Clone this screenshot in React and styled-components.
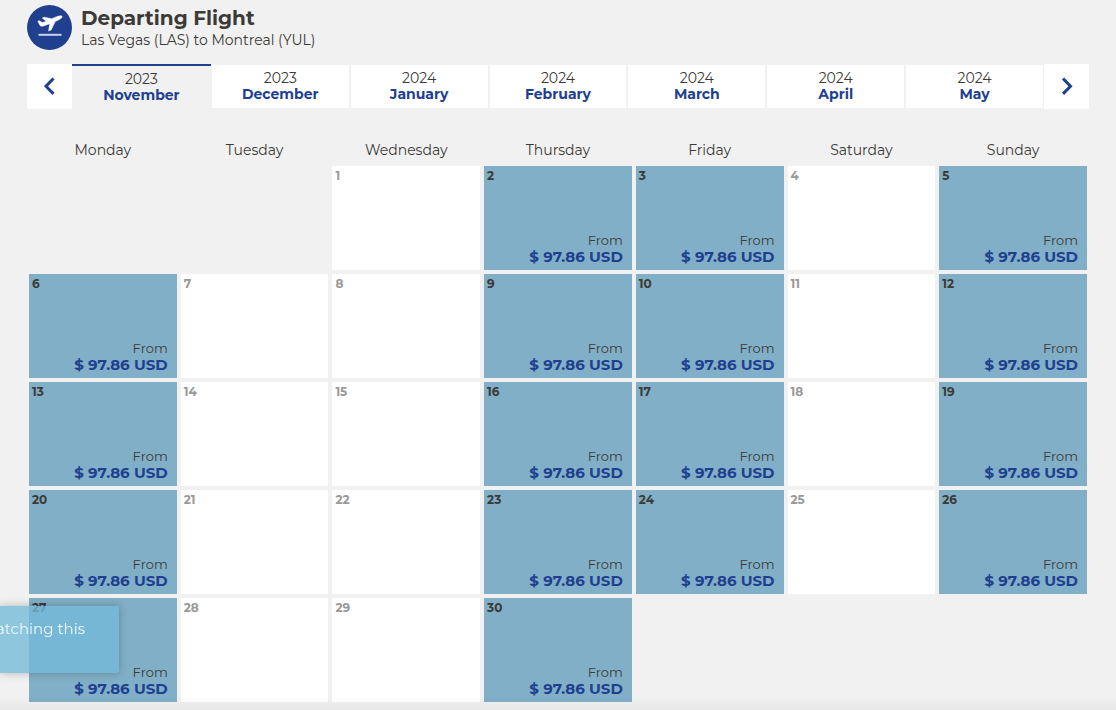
import React, { useState } from 'react';
import styled, { createGlobalStyle, ThemeProvider } from 'styled-components';

const theme = {
  navy: '#203f8f',
  text: '#3c3a36',
  muted: '#999997',
  page: '#f1f1f1',
  fare: '#81afc7',
};

const GlobalStyle = createGlobalStyle`
  *, *::before, *::after {
    box-sizing: border-box;
  }
  body {
    margin: 0;
    background: ${(props) => props.theme.page};
    color: ${(props) => props.theme.text};
    font-family: Montserrat, Inter, 'Open Sans', sans-serif;
    font-size: 14px;
    line-height: 16px;
  }
  button {
    margin: 0;
    padding: 0;
    border: 0;
    border-radius: 0;
    background: none;
    color: inherit;
    font: inherit;
    cursor: pointer;
  }
`;

const Page = styled.main`
  padding: 5px 27px 6px;
`;

const Header = styled.header`
  display: flex;
  gap: 9px;
  margin-bottom: 14px;
`;

const HeaderIcon = styled.svg`
  flex: none;
  width: 45px;
  height: 45px;
`;

const Title = styled.h1`
  margin: 0;
  font-size: 20px;
  font-weight: 700;
  line-height: 26px;
`;

const Route = styled.p`
  margin: 0;
  line-height: 18px;
`;

const MonthNav = styled.nav`
  display: flex;
  height: 45px;
  margin-bottom: 32px;
`;

const ArrowButton = styled.button`
  display: flex;
  flex: none;
  align-items: center;
  justify-content: center;
  width: 45px;
  background: #fff;
  color: ${(props) => props.theme.navy};
`;

const Months = styled.div`
  display: grid;
  flex: 1;
  grid-template-columns: repeat(7, minmax(0, 1fr));
`;

const MonthTab = styled.button`
  display: flex;
  flex-direction: column;
  align-items: center;
  padding-top: 5px;
  border: 0 solid ${(props) => props.theme.page};
  border-width: ${(props) => (props.$active ? '2px 0 0' : '1px')};
  border-top-color: ${(props) =>
    props.$active ? props.theme.navy : props.theme.page};
  background: ${(props) => (props.$active ? props.theme.page : '#fff')};
`;

const MonthName = styled.strong`
  color: ${(props) => props.theme.navy};
  font-weight: 700;
`;

const Calendar = styled.table`
  width: 100%;
  border-collapse: collapse;
  table-layout: fixed;

  th {
    height: 23px;
    padding: 0 0 5px;
    font-weight: 400;
  }
  td {
    height: 108px;
    padding: 2px;
  }
`;

const EmptyDay = styled.div`
  height: 104px;
  padding: 2px 3px;
  background: #fff;
  color: ${(props) => props.theme.muted};
  font-size: 12px;
  font-weight: 700;
`;

const FareDay = styled.button`
  display: flex;
  flex-direction: column;
  align-items: flex-end;
  width: 100%;
  height: 104px;
  padding: 2px 9px 5px 3px;
  background: ${(props) => props.theme.fare};
`;

const DayNumber = styled.span`
  align-self: flex-start;
  font-size: 12px;
  font-weight: 700;
`;

const From = styled.span`
  margin-top: auto;
  font-size: 13px;
  line-height: 17px;
`;

const Price = styled.span`
  color: ${(props) => props.theme.navy};
  font-size: 15px;
  font-weight: 700;
`;

const Toast = styled.aside`
  position: fixed;
  bottom: 37px;
  left: 0;
  display: flex;
  justify-content: flex-end;
  width: 119px;
  height: 67px;
  padding: 15px 34px 15px 0;
  border-radius: 0 3px 3px 0;
  background: rgba(114, 186, 217, 0.78);
  box-shadow: 0 0 8px rgba(0, 0, 0, 0.25);
  color: #eef7fb;
  font-size: 15px;
  white-space: nowrap;
`;

const BottomShade = styled.div`
  position: fixed;
  right: 0;
  bottom: 0;
  left: 0;
  height: 14px;
  background: linear-gradient(rgba(0, 0, 0, 0), rgba(0, 0, 0, 0.04));
  pointer-events: none;
`;

const MONTHS = [
  { year: 2023, name: 'November' },
  { year: 2023, name: 'December' },
  { year: 2024, name: 'January' },
  { year: 2024, name: 'February' },
  { year: 2024, name: 'March' },
  { year: 2024, name: 'April' },
  { year: 2024, name: 'May' },
];

const WEEKDAYS = [
  'Monday',
  'Tuesday',
  'Wednesday',
  'Thursday',
  'Friday',
  'Saturday',
  'Sunday',
];

const FARE_DAYS = [2, 3, 5, 6, 9, 10, 12, 13, 16, 17, 19, 20, 23, 24, 26, 27, 30];

// November 2023 starts on a Wednesday
const WEEKS = [0, 1, 2, 3, 4].map((week) =>
  WEEKDAYS.map((_, index) => {
    const day = week * 7 + index - 1;
    return day >= 1 && day <= 30 ? day : null;
  })
);

const DepartureIcon = () => (
  <HeaderIcon viewBox="0 0 45 45" aria-hidden="true">
    <circle cx="22.5" cy="22.5" r="22.5" fill="#203f8f" />
    <path
      d="M10.8 16.2l1.5-.5 3.2 1.9 3.8-1.4-4.1-3.1 2.3-.9 7.2 1.6 4.9-2.1c2-.8 5-1.2 5.5-.4.6 1-1.4 2.6-3.3 3.5l-3.5 1.7-4.2 8.5-2.5 1 1.1-7.3-4.7 1.8c-1.8.7-3.8 1.2-4.8.3z"
      fill="#fff"
      stroke="#fff"
      strokeWidth="0.5"
      strokeLinejoin="round"
    />
    <path d="M11.5 29.8h23" stroke="#c9d2ea" strokeWidth="2" />
  </HeaderIcon>
);

const Chevron = ({ d }) => (
  <svg width="12" height="20" viewBox="0 0 12 20" aria-hidden="true">
    <path d={d} fill="none" stroke="currentColor" strokeWidth="3" />
  </svg>
);

const DayCell = ({ day }) => {
  if (!day) return <td />;
  if (!FARE_DAYS.includes(day)) {
    return (
      <td>
        <EmptyDay>{day}</EmptyDay>
      </td>
    );
  }
  return (
    <td>
      <FareDay type="button">
        <DayNumber>{day}</DayNumber>
        <From>From</From>
        <Price>$ 97.86 USD</Price>
      </FareDay>
    </td>
  );
};

const App = () => {
  const [active, setActive] = useState(0);

  return (
    <ThemeProvider theme={theme}>
      <GlobalStyle />
      <Page>
        <Header>
          <DepartureIcon />
          <div>
            <Title>Departing Flight</Title>
            <Route>Las Vegas (LAS) to Montreal (YUL)</Route>
          </div>
        </Header>
        <MonthNav aria-label="Months">
          <ArrowButton type="button" aria-label="Previous month">
            <Chevron d="M9.5 1.5L2 9.2l7.5 7.7" />
          </ArrowButton>
          <Months>
            {MONTHS.map((month, index) => (
              <MonthTab
                key={month.name}
                type="button"
                $active={index === active}
                onClick={() => setActive(index)}
              >
                <span>{month.year}</span>
                <MonthName>{month.name}</MonthName>
              </MonthTab>
            ))}
          </Months>
          <ArrowButton type="button" aria-label="Next month">
            <Chevron d="M2 1.5l7.5 7.7L2 16.9" />
          </ArrowButton>
        </MonthNav>
        <Calendar>
          <thead>
            <tr>
              {WEEKDAYS.map((name) => (
                <th key={name} scope="col">
                  {name}
                </th>
              ))}
            </tr>
          </thead>
          <tbody>
            {WEEKS.map((week, row) => (
              <tr key={row}>
                {week.map((day, index) => (
                  <DayCell key={index} day={day} />
                ))}
              </tr>
            ))}
          </tbody>
        </Calendar>
      </Page>
      <Toast>atching this</Toast>
      <BottomShade />
    </ThemeProvider>
  );
};

export default App;
